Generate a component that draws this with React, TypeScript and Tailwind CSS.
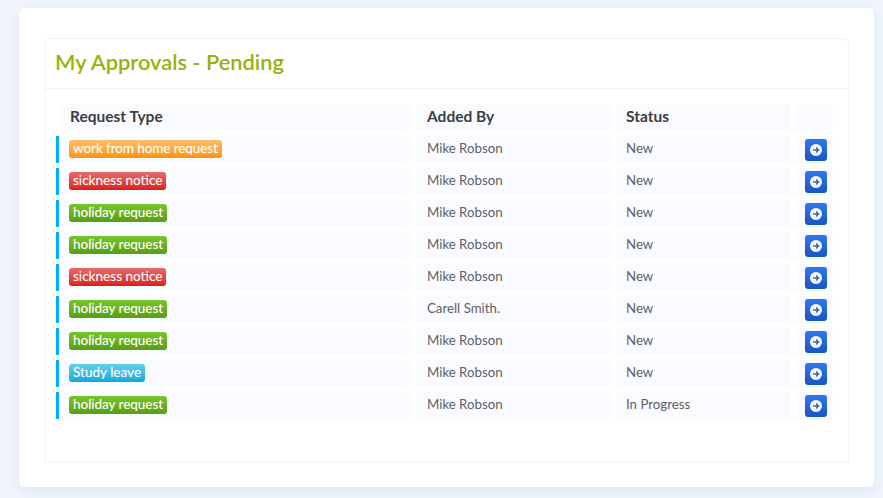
import React from "react";

type Kind = "work" | "sick" | "holiday" | "study";

const badgeClass: Record<Kind, string> = {
  work: "bg-gradient-to-b from-[#ffbe63] to-[#ff9507] tracking-[-0.1px]",
  sick: "bg-gradient-to-b from-[#e46a6c] to-[#dc1a14]",
  holiday: "bg-gradient-to-b from-[#7cc42c] to-[#55a014] tracking-[-0.05px]",
  study: "bg-gradient-to-b from-[#64cdee] to-[#07a8dc]",
};

const badgeLabel: Record<Kind, string> = {
  work: "work from home request",
  sick: "sickness notice",
  holiday: "holiday request",
  study: "Study leave",
};

const rows: { kind: Kind; by: string; status: string }[] = [
  { kind: "work", by: "Mike Robson", status: "New" },
  { kind: "sick", by: "Mike Robson", status: "New" },
  { kind: "holiday", by: "Mike Robson", status: "New" },
  { kind: "holiday", by: "Mike Robson", status: "New" },
  { kind: "sick", by: "Mike Robson", status: "New" },
  { kind: "holiday", by: "Carell Smith.", status: "New" },
  { kind: "holiday", by: "Mike Robson", status: "New" },
  { kind: "study", by: "Mike Robson", status: "New" },
  { kind: "holiday", by: "Mike Robson", status: "In Progress" },
];

const ArrowIcon = () => (
  <svg width="12" height="12" viewBox="0 0 12 12">
    <circle cx="6" cy="6" r="6" fill="#ffffff" />
    <path d="M3 6h5.5M6 3.5 8.5 6 6 8.5" fill="none" stroke="#2463d8" strokeWidth="1.5" />
  </svg>
);

export default function App() {
  return (
    <div className="h-[498px] w-[883px] overflow-hidden bg-[#f0f5fd] pt-2 pl-[19px] font-['Lato','Noto_Sans',sans-serif]">
      <div className="h-[479px] w-[855px] rounded-md bg-white pt-[30px] pl-[25px] shadow-[0_4px_14px_rgba(190,205,235,0.35)]">
        <div className="h-[424px] w-[805px] rounded-t-md border border-[#e8f6fa]">
          <div className="flex h-[50px] items-center border-b border-[#e8f6fa] pb-0.5 pl-2.5">
            <h2 className="text-[21.8px] font-semibold text-[#99b00d]">My Approvals - Pending</h2>
          </div>
          <div className="grid grid-cols-[356px_194px_174px_38px] gap-[5px] pt-[15px] pl-[11px]">
            <div className="ml-1 flex h-[27px] items-center bg-[#fafbff] pb-0.5 pl-[10px] text-[15.5px] font-bold text-[#3a3d42]">Request Type</div>
            <div className="flex h-[27px] items-center bg-[#fafbff] pb-0.5 pl-[10px] text-[15.5px] font-bold text-[#3a3d42]">Added By</div>
            <div className="flex h-[27px] items-center bg-[#fafbff] pb-0.5 pl-[10px] text-[15.5px] font-bold text-[#3a3d42]">Status</div>
            <div className="h-[27px] bg-[#fafbff]" />
            {rows.map((row, i) => (
              <React.Fragment key={i}>
                <div className="flex h-[27px] items-center border-l-[3px] border-[#00b0ff] bg-[#fafbff] pb-0.5 pl-[10px]">
                  <span className={`flex h-[18px] items-center rounded-[3px] px-1 text-[13.5px] font-medium text-white ${badgeClass[row.kind]}`}>
                    {badgeLabel[row.kind]}
                  </span>
                </div>
                <div className="flex h-[27px] items-center bg-[#fafbff] pb-0.5 pl-[10px] text-[13.25px] text-[#5c5f64]">{row.by}</div>
                <div className="flex h-[27px] items-center bg-[#fafbff] pb-0.5 pl-[10px] text-[13.25px] text-[#5c5f64]">{row.status}</div>
                <div className="flex h-[27px] items-center bg-[#fafbff] pl-[10px]">
                  <div className="flex h-[22px] w-[22px] items-center justify-center rounded-[3px] bg-gradient-to-b from-[#2f77ee] to-[#1a55c6]">
                    <ArrowIcon />
                  </div>
                </div>
              </React.Fragment>
            ))}
          </div>
        </div>
      </div>
    </div>
  );
}
